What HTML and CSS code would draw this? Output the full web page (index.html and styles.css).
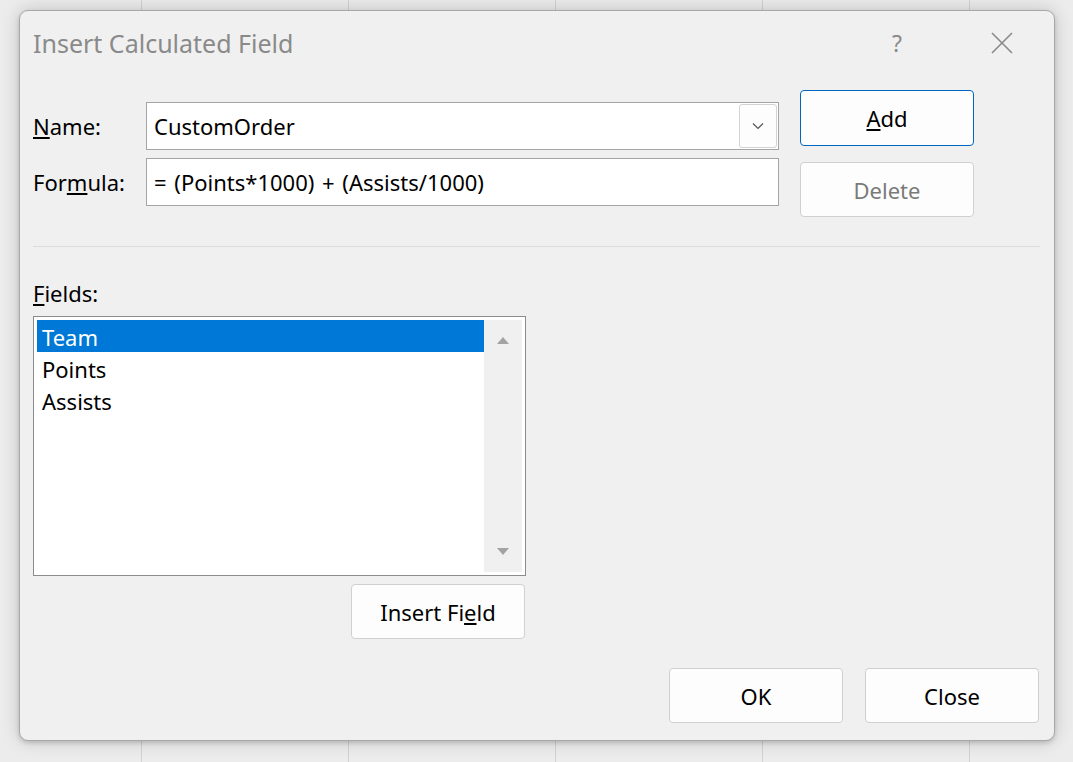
FILE: index.html
```html
<!DOCTYPE html>
<html lang="en">
<head>
    <meta charset="UTF-8">
    <title>Insert Calculated Field</title>
    <link rel="stylesheet" href="styles.css">
</head>
<body>

    <div class="dialog">
        <div class="titleBar">
            <div class="title">Insert Calculated Field</div>
            <div class="help">?</div>
            <div class="closeX">
                <svg width="22" height="22" viewBox="0 0 22 22"><path d="M1 1 L21 21 M21 1 L1 21" stroke="#8a8a8a" stroke-width="1.6" fill="none"/></svg>
            </div>
        </div>

        <div class="topSection">
            <div class="formGrid">
                <label class="label"><u>N</u>ame:</label>
                <div class="input combo">
                    <span class="value">CustomOrder</span>
                    <div class="dropBtn">
                        <svg width="12" height="8" viewBox="0 0 12 8"><path d="M1 1.5 L6 6.5 L11 1.5" stroke="#555" stroke-width="1.2" fill="none"/></svg>
                    </div>
                </div>
                <label class="label">For<u>m</u>ula:</label>
                <div class="input">
                    <span class="value">= (Points*1000) + (Assists/1000)</span>
                </div>
            </div>
            <div class="sideButtons">
                <button class="btn primary"><u>A</u>dd</button>
                <button class="btn disabled">Delete</button>
            </div>
        </div>

        <div class="separator"></div>

        <div class="fieldsLabel"><u>F</u>ields:</div>
        <div class="fieldsBlock">
            <div class="listBox">
                <div class="items">
                    <div class="item selected">Team</div>
                    <div class="item">Points</div>
                    <div class="item">Assists</div>
                </div>
                <div class="scrollBar">
                    <svg width="12" height="8" viewBox="0 0 12 8"><path d="M0 8 L6 1 L12 8 Z" fill="#a3a3a3"/></svg>
                    <svg width="12" height="8" viewBox="0 0 12 8"><path d="M0 0 L6 7 L12 0 Z" fill="#a3a3a3"/></svg>
                </div>
            </div>
            <button class="btn insertBtn">Insert Fi<u>e</u>ld</button>
        </div>

        <div class="footer">
            <button class="btn">OK</button>
            <button class="btn">Close</button>
        </div>
    </div>

</body>
</html>
```

FILE: styles.css
```css
body {
    margin: 0;
    padding: 0;
    width: 1073px;
    height: 762px;
    overflow: hidden;
    font-family: "Noto Sans", "Open Sans", sans-serif;
    background-color: #ececec;
    background-image:
        linear-gradient(to right, transparent 141px, #d2d2d2 141px, #d2d2d2 142px, transparent 142px),
        linear-gradient(to bottom, transparent 48px, #d4d4d4 48px, #d4d4d4 49px, transparent 49px);
    background-size: 207px 100%, 100% 43px;
    background-position: 0 0, 0 0;
}

.dialog {
    box-sizing: border-box;
    margin: 10px 0 0 19px;
    width: 1036px;
    height: 731px;
    padding: 0 14px 17px 13px;
    background: #f0f0f0;
    border: 1px solid #a8a8a8;
    border-radius: 9px;
    box-shadow: 0 0 18px rgba(0, 0, 0, 0.18), 0 2px 4px rgba(0, 0, 0, 0.15);
    display: flex;
    flex-direction: column;
}

.titleBar {
    height: 79px;
    display: flex;
    align-items: flex-start;
    padding-top: 14px;
    box-sizing: border-box;
    color: #8a8a8a;
}

.title {
    font-size: 25px;
    flex: 1;
    line-height: 36px;
}

.help {
    font-size: 23px;
    line-height: 36px;
    width: 20px;
    margin-right: 79px;
}

.closeX {
    width: 22px;
    padding-top: 7px;
    margin-right: 27px;
}

.topSection {
    display: flex;
    gap: 21px;
}

.formGrid {
    display: grid;
    grid-template-columns: 113px 633px;
    row-gap: 8px;
    margin-top: 12px;
    align-items: center;
    align-self: flex-start;
}

.label {
    font-size: 22px;
    color: #000;
}

.input {
    box-sizing: border-box;
    height: 48px;
    background: #fff;
    border: 1px solid #a5a5a5;
    display: flex;
    align-items: center;
    padding-left: 7px;
    font-size: 22px;
}

.input .value {
    flex: 1;
    word-spacing: 2px;
}

.dropBtn {
    box-sizing: border-box;
    width: 38px;
    height: 44px;
    margin-right: 1px;
    border: 1px solid #d3d3d3;
    border-radius: 3px;
    background: #fdfdfd;
    display: flex;
    align-items: center;
    justify-content: center;
}

.sideButtons {
    display: flex;
    flex-direction: column;
    gap: 16px;
}

.btn {
    box-sizing: border-box;
    width: 174px;
    height: 55px;
    font-family: "Noto Sans", "Open Sans", sans-serif;
    font-size: 22px;
    color: #000;
    background: #fdfdfd;
    border: 1px solid #d0d0d0;
    border-radius: 4px;
    padding: 0;
}

.btn.primary {
    height: 56px;
    border: 1px solid #0067c0;
}

.btn.disabled {
    color: #7a7a7a;
}

.separator {
    height: 1px;
    background: #dcdcdc;
    margin: 29px 0 0 0;
}

.fieldsLabel {
    font-size: 22px;
    margin-top: 31px;
    height: 38px;
}

.fieldsBlock {
    width: 493px;
    display: flex;
    flex-direction: column;
    align-items: flex-end;
    gap: 8px;
}

.listBox {
    box-sizing: border-box;
    width: 493px;
    height: 260px;
    border: 1px solid #8c8c8c;
    background: #fff;
    padding: 3px;
    display: flex;
}

.items {
    flex: 1;
}

.item {
    height: 32px;
    line-height: 34px;
    padding-left: 5px;
    font-size: 22px;
}

.item.selected {
    background: #0078d7;
    color: #fff;
}

.scrollBar {
    width: 38px;
    background: #f0f0f0;
    display: flex;
    flex-direction: column;
    justify-content: space-between;
    align-items: center;
    padding: 16px 0 16px 0;
}

.insertBtn {
    margin-right: 1px;
}

.footer {
    margin-top: auto;
    display: flex;
    justify-content: flex-end;
    gap: 22px;
    padding-right: 1px;
}
```
